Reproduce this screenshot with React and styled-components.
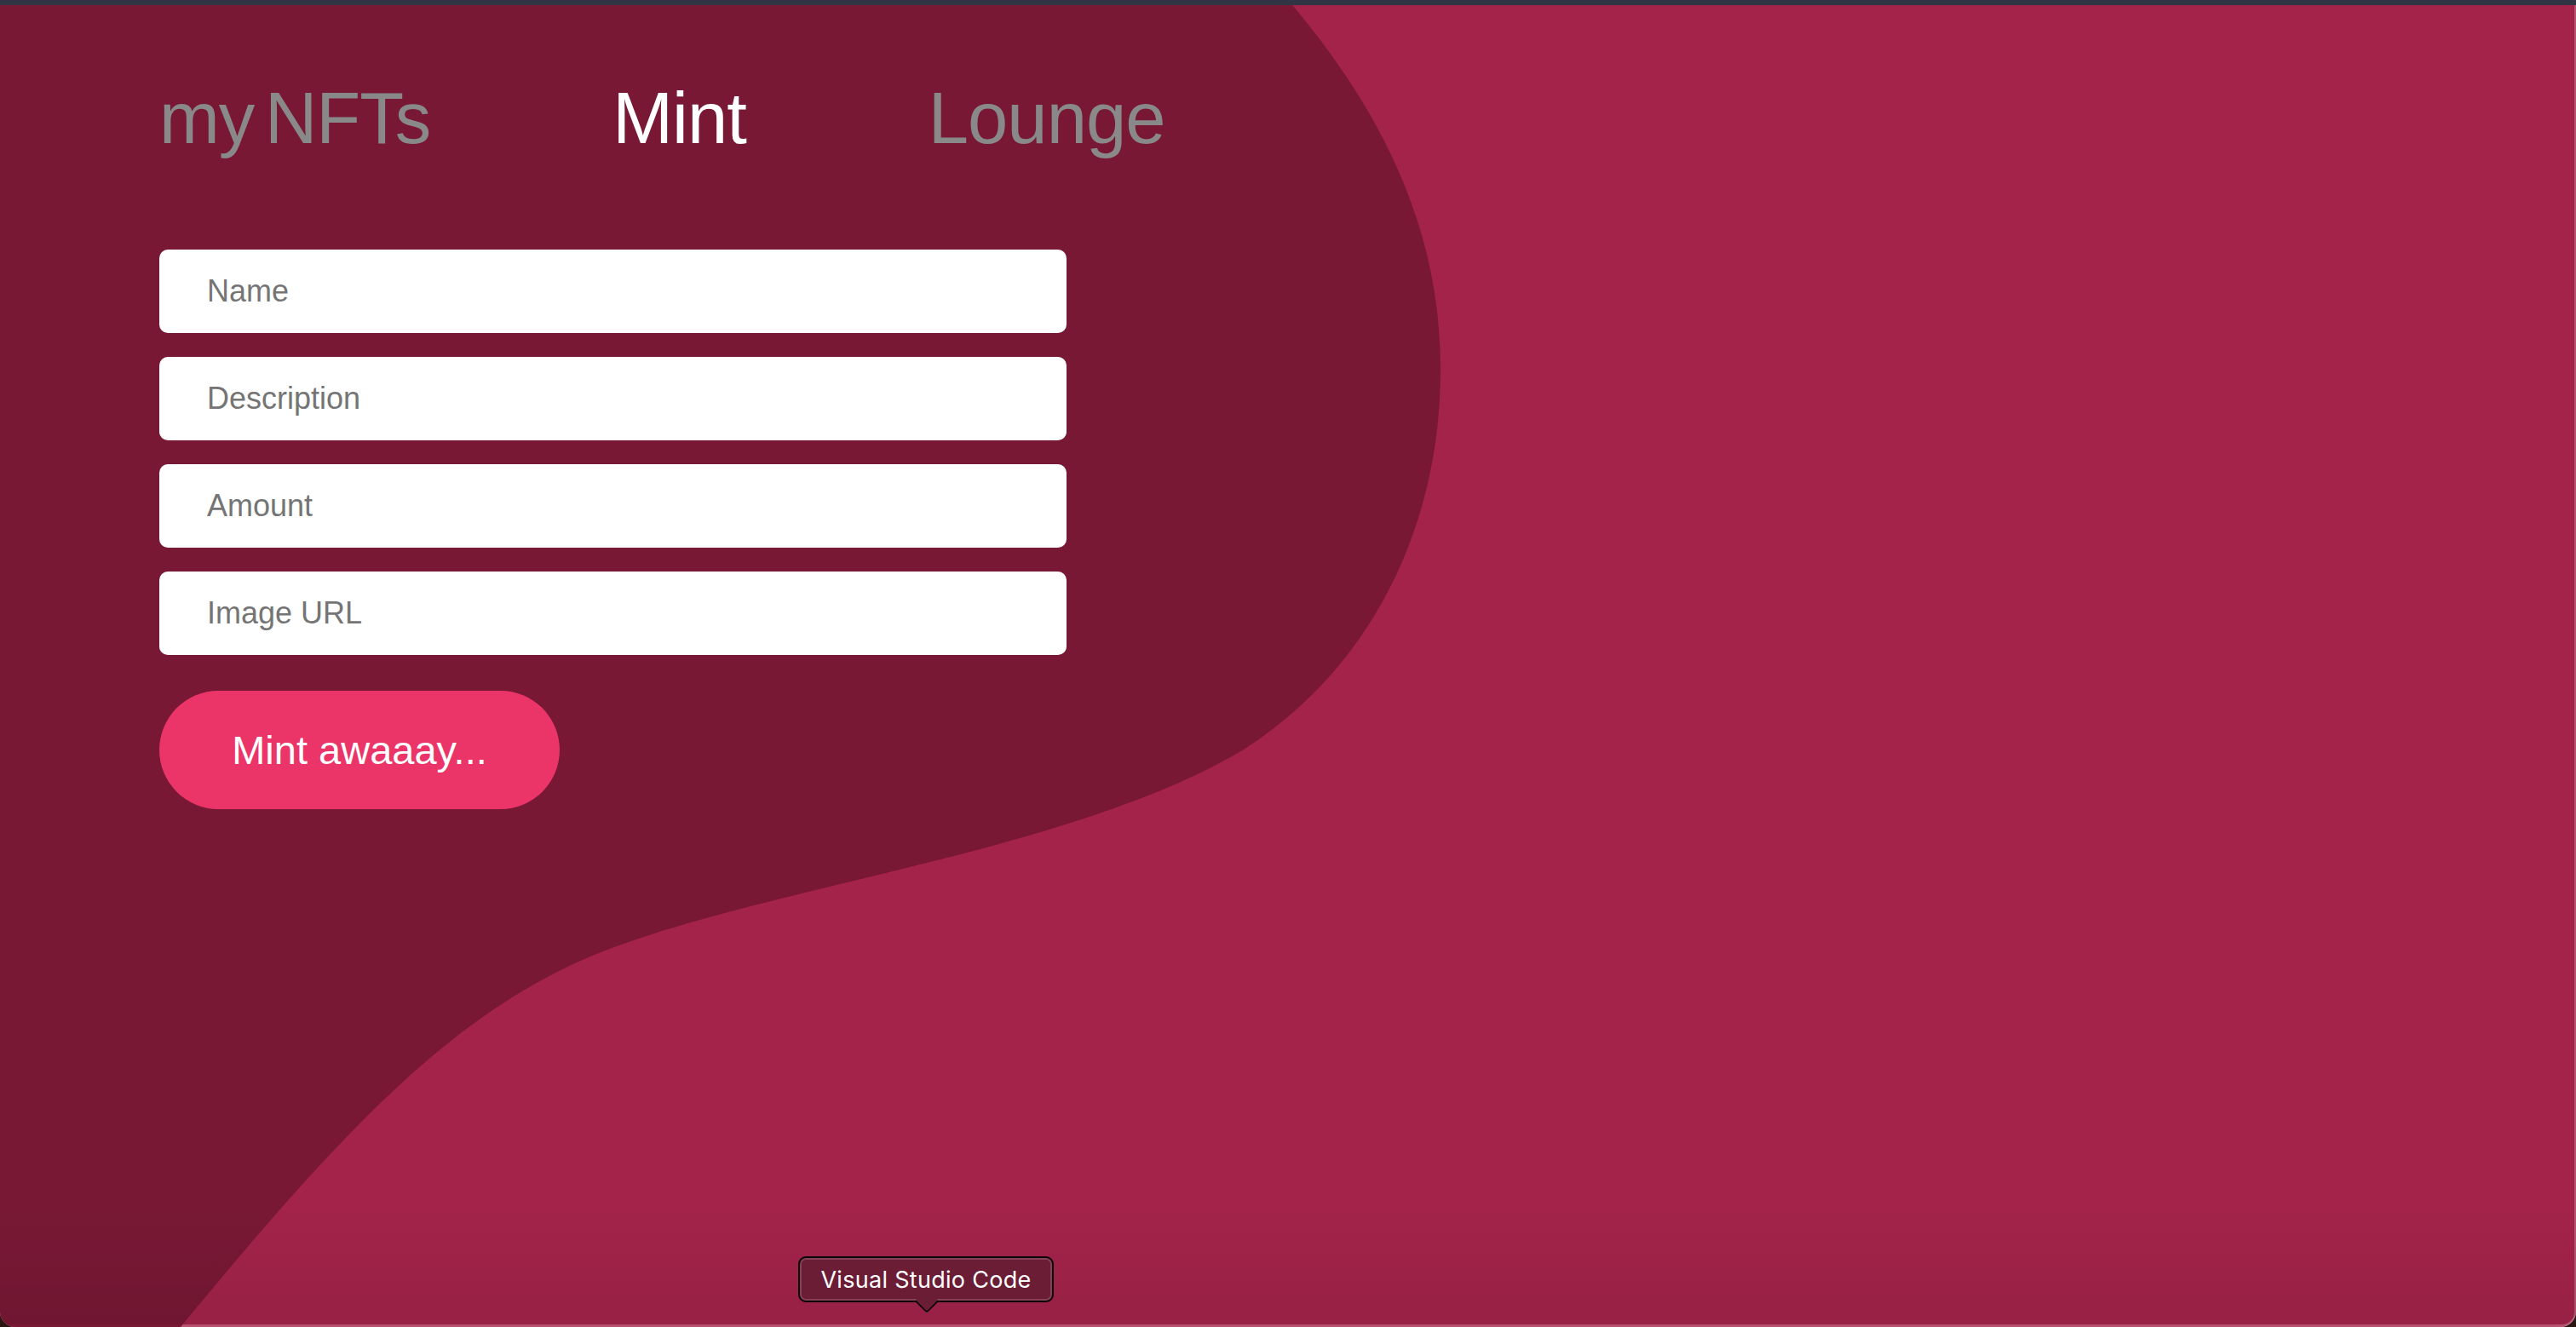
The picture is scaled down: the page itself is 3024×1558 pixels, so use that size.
import React from 'react';
import styled, { createGlobalStyle } from 'styled-components';

const GlobalStyle = createGlobalStyle`
  html, body {
    margin: 0;
    padding: 0;
    background: #2a1712;
  }
  * {
    box-sizing: border-box;
  }
`;

const fields = ['Name', 'Description', 'Amount', 'Image URL'];
const tabs = [
  { label: 'my NFTs', active: false },
  { label: 'Mint', active: true },
  { label: 'Lounge', active: false },
];

// the dark wave on the left, drawn in page pixels
const Wave = () => (
  <WaveSvg viewBox="0 0 3024 1558" preserveAspectRatio="none">
    <path
      d="M0,0 L1512,0 C1640,150 1700,300 1690,470 C1680,640 1600,790 1460,880 C1260,1000 900,1040 700,1120 C530,1190 400,1330 212,1558 L0,1558 Z"
      fill="#781835"
    />
  </WaveSvg>
);

const App = () => {
  return (
    <>
      <GlobalStyle />
      <Window>
        <TopStrip />
        <Wave />
        <DockShade />
        <Content>
          <Nav>
            {tabs.map((tab) => (
              <NavLink key={tab.label} $active={tab.active}>
                {tab.label}
              </NavLink>
            ))}
          </Nav>
          <Form onSubmit={(e) => e.preventDefault()}>
            {fields.map((field) => (
              <Field key={field} placeholder={field} />
            ))}
            <MintButton type="submit">Mint awaaay...</MintButton>
          </Form>
        </Content>
        <Tooltip>Visual Studio Code</Tooltip>
      </Window>
    </>
  );
};

const Window = styled.div`
  position: relative;
  width: 100vw;
  height: 100vh;
  overflow: hidden;
  background: #a3234a;
  border-radius: 0 0 18px 18px;
  box-shadow: inset 2px 0 0 rgba(255, 255, 255, 0.22),
    inset -2px 0 0 rgba(255, 255, 255, 0.22),
    inset 0 -3px 0 rgba(255, 255, 255, 0.22);
  font-family: 'Liberation Sans', Arial, sans-serif;
`;

const TopStrip = styled.div`
  position: relative;
  z-index: 2;
  height: 6px;
  background: #313543;
`;

const WaveSvg = styled.svg`
  position: absolute;
  inset: 0;
  width: 100%;
  height: 100%;
  z-index: 0;
`;

const DockShade = styled.div`
  position: absolute;
  left: 0;
  right: 0;
  bottom: 3px;
  height: 140px;
  z-index: 1;
  pointer-events: none;
  background: linear-gradient(to bottom, rgba(0, 0, 0, 0), rgba(0, 0, 0, 0.07));
`;

const Content = styled.div`
  position: relative;
  z-index: 1;
  padding: 83px 0 0 187px;
  display: flex;
  flex-direction: column;
  gap: 104px;
`;

const Nav = styled.nav`
  display: flex;
  align-items: center;
  gap: 214px;
`;

const NavLink = styled.a`
  font-size: 85px;
  line-height: 100px;
  letter-spacing: -1px;
  word-spacing: -10px;
  color: ${(p) => (p.$active ? '#ffffff' : '#898989')};
  text-decoration: none;
  cursor: pointer;
`;

const Form = styled.form`
  display: flex;
  flex-direction: column;
  align-items: flex-start;
  gap: 28px;
`;

const Field = styled.input`
  width: 1065px;
  height: 98px;
  border: none;
  border-radius: 10px;
  background: #ffffff;
  padding: 0 0 0 56px;
  font-family: 'Liberation Sans', Arial, sans-serif;
  font-size: 36px;
  color: #333;
  outline: none;

  &::placeholder {
    color: #757575;
  }
`;

const MintButton = styled.button`
  margin-top: 14px;
  width: 470px;
  height: 139px;
  border: none;
  border-radius: 70px;
  background: #eb3468;
  color: #ffffff;
  font-family: 'Liberation Sans', Arial, sans-serif;
  font-size: 47px;
  cursor: pointer;
`;

const Tooltip = styled.div`
  position: absolute;
  z-index: 3;
  left: 937px;
  top: 1475px;
  width: 300px;
  height: 54px;
  display: flex;
  align-items: center;
  justify-content: center;
  background: #6b1d36;
  border: 2px solid #0d0508;
  border-radius: 9px;
  box-shadow: inset 0 0 0 2px rgba(255, 255, 255, 0.16);
  color: #ffffff;
  font-family: Inter, 'Open Sans', sans-serif;
  font-size: 27px;
  letter-spacing: 0.3px;

  &::after {
    content: '';
    position: absolute;
    left: 50%;
    bottom: -11px;
    width: 18px;
    height: 18px;
    margin-left: -9px;
    background: #6b1d36;
    border-right: 2px solid #0d0508;
    border-bottom: 2px solid #0d0508;
    border-bottom-right-radius: 4px;
    transform: rotate(45deg);
  }
`;

export default App;
